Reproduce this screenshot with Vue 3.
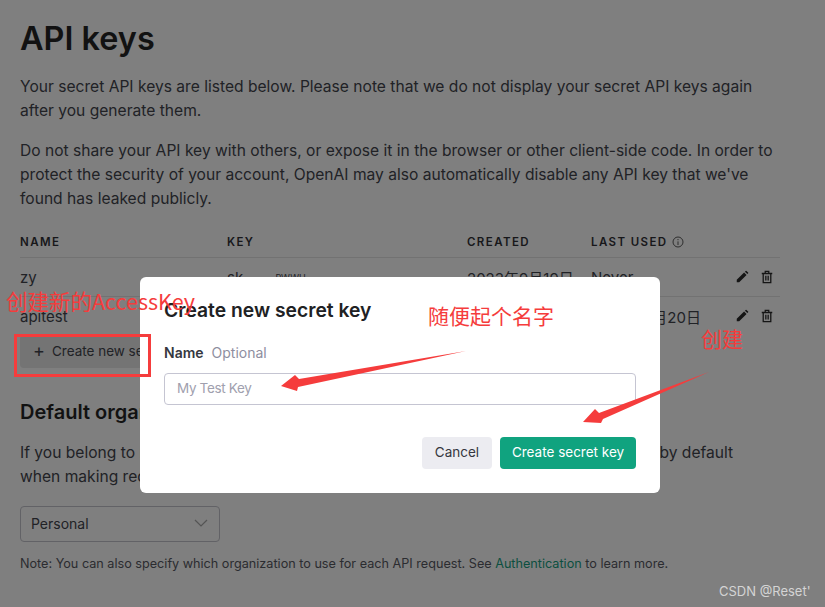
<template>
  <div class="screen">
    <main class="page">
      <h1 class="title">API keys</h1>
      <p class="para first">Your secret API keys are listed below. Please note that we do not display your secret API keys again after you generate them.</p>
      <p class="para second">Do not share your API key with others, or expose it in the browser or other client-side code. In order to protect the security of your account, OpenAI may also automatically disable any API key that we've found has leaked publicly.</p>

      <div class="table">
        <div class="row head">
          <span>NAME</span>
          <span>KEY</span>
          <span>CREATED</span>
          <span class="last-used">LAST USED
            <svg class="info" viewBox="0 0 12 12" width="12" height="12">
              <circle cx="6" cy="6" r="5" fill="none" stroke="#2e2e2e" stroke-width="1" />
              <path d="M6 5.4V9M6 3v1.2" stroke="#2e2e2e" stroke-width="1" />
            </svg>
          </span>
          <span></span>
        </div>
        <div v-for="k in keys" :key="k.name" class="row body">
          <span>{{ k.name }}</span>
          <span class="key"><span>sk-</span><span class="mask">PWWU</span></span>
          <span>{{ k.created }}</span>
          <span>{{ k.used }}</span>
          <span class="actions">
            <svg viewBox="0 0 24 24" width="14" height="14"><path fill="#151515" d="M3 21v-4.2L15.6 4.2l4.2 4.2L7.2 21H3zM17 2.8l1.3-1.3a1 1 0 0 1 1.4 0l2.8 2.8a1 1 0 0 1 0 1.4L21.2 7 17 2.8z" /></svg>
            <svg viewBox="0 0 24 24" width="14" height="14" fill="none" stroke="#151515" stroke-width="2.2"><path d="M3 6h18M9 6V2.5h6V6M5.5 6v15.5h13V6M10 10v8M14 10v8" /></svg>
          </span>
        </div>
      </div>

      <button class="new-btn"><span class="plus">+</span>Create new secret key</button>

      <h2 class="subtitle">Default organization</h2>
      <p class="para org">If you belong to multiple organizations, this setting controls which organization is used by default when making requests with the API keys above.</p>
      <div class="select">
        <span>Personal</span>
        <svg viewBox="0 0 14 8" width="14" height="8" fill="none" stroke="#555" stroke-width="1.2"><path d="M1 1l6 6 6-6" /></svg>
      </div>
      <p class="note">Note: You can also specify which organization to use for each API request. See <span class="link">Authentication</span> to learn more.</p>
    </main>

    <section class="modal">
      <h3 class="modal-title">Create new secret key</h3>
      <div class="label"><b>Name</b><span>Optional</span></div>
      <div class="input">My Test Key</div>
      <div class="modal-actions">
        <button class="cancel">Cancel</button>
        <button class="submit">Create secret key</button>
      </div>
    </section>

    <svg class="arrows" viewBox="0 0 825 607" width="825" height="607">
      <polygon fill="#f53c3c" points="466,351 299,379 295,375 281,386 297,391 298,387" />
      <polygon fill="#f53c3c" points="709,372 599,413 595,409 583,422 601,423 603,419" />
    </svg>
    <div class="red-box"></div>
    <span class="note-a">创建新的AccessKey</span>
    <span class="note-b">随便起个名字</span>
    <span class="note-c">创建</span>
    <span class="watermark">CSDN @Reset'</span>
  </div>
</template>

<script setup>
const keys = [
  { name: 'zy', created: '2023年9月19日', used: 'Never' },
  { name: 'apitest', created: '2023年9月20日', used: '2023年9月20日' }
]
</script>

<style>
html, body { margin: 0; background: #7f7f7f; }
</style>

<style scoped>
.screen {
  position: relative;
  width: 825px;
  height: 607px;
  overflow: hidden;
  background: #7f7f7f;
  font-family: Inter, "Noto Sans CJK SC", sans-serif;
  color: #212226;
}
.page { padding: 20px 45px 0 20px; }
.title { margin: 0; font-size: 32.4px; line-height: 38px; font-weight: 600; color: #121212; }
.para { margin: 0; font-size: 15.6px; line-height: 24px; }
.para.first { margin-top: 17px; }
.para.second { margin-top: 16px; }
.table { margin-top: 15px; width: 760px; }
.row {
  display: grid;
  grid-template-columns: 207px 240px 124px 117px 72px;
  align-items: center;
  border-bottom: 1px solid #727272;
}
.row:last-child { border-bottom: 0; }
.head { height: 31px; font-size: 11.5px; font-weight: 600; letter-spacing: 1.4px; color: #17171a; }
.body { height: 38px; font-size: 15px; }
.last-used { display: flex; align-items: center; gap: 4px; }
.info { display: block; }
.key { display: flex; gap: 26px; align-items: center; }
.mask { font-size: 9px; }
.actions { display: flex; justify-content: flex-end; gap: 11px; padding-right: 6px; }
.new-btn {
  display: flex;
  align-items: center;
  gap: 7px;
  height: 33px;
  padding: 0 13px 2px;
  border: 0;
  border-radius: 4px;
  background: #747474;
  color: #212226;
  font: 13.5px Inter, sans-serif;
}
.plus { font-size: 18px; }
.subtitle { margin: 31px 0 0; font-size: 20px; line-height: 26px; font-weight: 600; color: #121212; }
.para.org { margin-top: 16px; max-width: 750px; }
.select {
  display: flex;
  justify-content: space-between;
  align-items: center;
  box-sizing: border-box;
  width: 200px;
  height: 36px;
  margin-top: 17px;
  padding: 0 11px 2px 10px;
  border: 1px solid #626266;
  border-radius: 4px;
  font-size: 14px;
}
.note { margin: 13px 0 0; font-size: 12.65px; line-height: 18px; color: #2b2c30; }
.link { color: #0c4f3f; }

.modal {
  position: absolute;
  left: 140px;
  top: 277px;
  box-sizing: border-box;
  width: 520px;
  height: 216px;
  padding: 20px 24px 0;
  background: #fff;
  border-radius: 6px;
}
.modal-title { margin: 0; font-size: 19.3px; line-height: 26px; font-weight: 600; color: #202123; }
.label { display: flex; gap: 8px; margin-top: 20px; font-size: 14px; line-height: 20px; }
.label b { font-weight: 600; color: #353740; }
.label span { color: #8e8ea0; }
.input {
  box-sizing: border-box;
  height: 32px;
  margin-top: 10px;
  padding: 0 12px;
  border: 1px solid #c5c5d2;
  border-radius: 4px;
  font-size: 13.5px;
  letter-spacing: -0.35px;
  line-height: 28px;
  color: #a0a0ae;
}
.modal-actions { display: flex; justify-content: flex-end; gap: 8px; margin-top: 32px; }
.modal-actions button {
  height: 32px;
  padding: 0 0 3px;
  border: 0;
  border-radius: 4px;
  font: 13.5px Inter, sans-serif;
}
.cancel { width: 70px; background: #ececf1; color: #353740; }
.submit { width: 136px; background: #10a37f; color: #fff; }

.arrows { position: absolute; left: 0; top: 0; pointer-events: none; }
.red-box {
  position: absolute;
  left: 14px;
  top: 334px;
  box-sizing: border-box;
  width: 137px;
  height: 43px;
  border: 3px solid #f53c3c;
}
.note-a, .note-b, .note-c {
  position: absolute;
  color: #f53c3c;
  font-family: "Noto Sans CJK SC", sans-serif;
  font-weight: 400;
  white-space: nowrap;
}
.note-a { left: 6px; top: 286px; font-size: 21.5px; line-height: 30px; }
.note-b { left: 428px; top: 300px; font-size: 21px; line-height: 30px; }
.note-c { left: 701px; top: 323px; font-size: 21px; line-height: 30px; }
.watermark {
  position: absolute;
  left: 719px;
  top: 583px;
  font-size: 13px;
  line-height: 16px;
  color: #d4d4d4;
  white-space: nowrap;
}
</style>
